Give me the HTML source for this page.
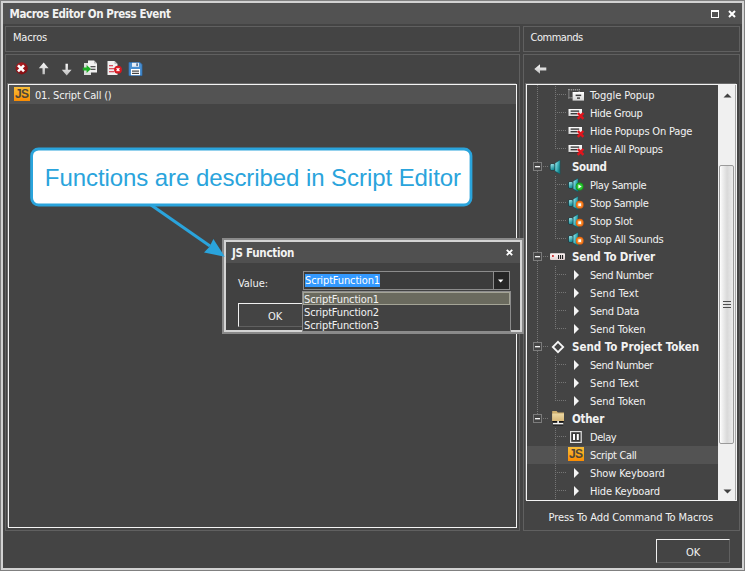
<!DOCTYPE html>
<html><head><meta charset="utf-8"><title>Macros Editor On Press Event</title>
<style>
html,body{margin:0;padding:0}
body{width:745px;height:571px;background:#444;position:relative;overflow:hidden;font-family:"DejaVu Sans Condensed","Liberation Sans",sans-serif;font-size:11px;color:#f2f2f2;letter-spacing:-0.2px}
div,span,svg{position:absolute;box-sizing:border-box}
.t{white-space:nowrap;line-height:14px;height:14px}
.b{font-weight:bold}
.win{left:0;top:0;width:745px;height:571px;border:1px solid #808080}
.win2{left:1px;top:1px;width:743px;height:569px;border:2px solid #d2d2d2}
.title{left:3px;top:3px;width:739px;height:21px;background:#525252}
.box{border:1px solid #606060}
.list{border:1px solid #f4f4f4;box-shadow:-1px -1px 0 #6a6a6a;background:#444}
.row{background:#535353}
.ic{overflow:visible}
.js{width:16px;height:14px;background:linear-gradient(#f8bc38,#f9a51c 55%,#fb8c02);color:#4e4638;font-family:"Liberation Sans",sans-serif;font-weight:bold;font-size:12px;line-height:14px;text-align:center;letter-spacing:-0.6px;text-indent:-0.5px}
.vd{width:1px;background-image:linear-gradient(#767676 50%,transparent 50%);background-size:1px 2px}
.hd{height:1px;background-image:linear-gradient(90deg,#767676 50%,transparent 50%);background-size:2px 1px}
.exp{width:9px;height:9px;border:1px solid #7c7c7c;background:#444}
.exp i{position:absolute;left:1px;top:3px;width:5px;height:1px;background:#f4f4f4;box-shadow:0 0.5px 0 #bbb}
.btn{border:1px solid;border-color:#f0f0f0 #606060 #606060 #f0f0f0;background:#444;text-align:center;line-height:22px;padding-top:2px}
</style></head><body>
<svg width="0" height="0" style="left:0;top:0"><defs>
<linearGradient id="sg" x1="0" y1="0" x2="1" y2="0.6"><stop offset="0" stop-color="#b4ecee"/><stop offset="0.5" stop-color="#4cbcc4"/><stop offset="1" stop-color="#128088"/></linearGradient>
<linearGradient id="sg2" x1="0" y1="0" x2="0.4" y2="1"><stop offset="0" stop-color="#a8e8ec"/><stop offset="1" stop-color="#1a909a"/></linearGradient>
<linearGradient id="wg" x1="0" y1="0" x2="0" y2="1"><stop offset="0" stop-color="#ffffff"/><stop offset="1" stop-color="#d4d4d4"/></linearGradient>
<linearGradient id="dg" x1="0" y1="0" x2="0" y2="1"><stop offset="0" stop-color="#fff6f6"/><stop offset="1" stop-color="#e0d0d0"/></linearGradient>
<linearGradient id="fg" x1="0" y1="0" x2="0" y2="1"><stop offset="0" stop-color="#ecd8a4"/><stop offset="1" stop-color="#d8b878"/></linearGradient>
</defs></svg>
<div class="win"></div><div class="win2"></div>
<div class="title"></div>
<span class="t b" style="left:9.5px;top:7px;letter-spacing:-0.42px;font-size:11.5px">Macros Editor On Press Event</span>
<svg style="left:711px;top:10px" width="8" height="8" viewBox="0 0 8 8"><path d="M0 0H8V8H0Z M1 2V7H7V2Z" fill="#fff" fill-rule="evenodd"/></svg>
<svg style="left:728px;top:10px" width="8" height="8" viewBox="0 0 8 8"><path d="M1 1L7 7M7 1L1 7" stroke="#fff" stroke-width="2"/></svg>

<div class="box" style="left:5px;top:26px;width:515px;height:26px"></div>
<div class="box" style="left:523px;top:26px;width:217px;height:26px"></div>
<div class="box" style="left:5px;top:54px;width:515px;height:477px"></div>
<div class="box" style="left:523px;top:54px;width:217px;height:477px"></div>
<span class="t" style="left:13px;top:31px;letter-spacing:-0.18px">Macros</span>
<span class="t" style="left:530.6px;top:31px;letter-spacing:-0.50px">Commands</span>


<svg style="left:15px;top:61px" width="14" height="14" viewBox="0 0 14 14"><defs><radialGradient id="rg" cx="0.4" cy="0.3" r="0.8"><stop offset="0" stop-color="#b42024"/><stop offset="1" stop-color="#7a0c10"/></radialGradient></defs><circle cx="6.7" cy="7.3" r="6.1" fill="url(#rg)"/><path d="M3 4.3L9 10.4M9 4.3L3 10.4" stroke="#fff" stroke-width="2.6"/></svg>
<svg style="left:38px;top:62.4px" width="12" height="13" viewBox="0 0 12 13"><defs><linearGradient id="ag" x1="0" y1="0" x2="0" y2="1"><stop offset="0" stop-color="#fafafa"/><stop offset="1" stop-color="#bdbdbd"/></linearGradient></defs><path d="M5.7 0.5L10.6 6.3H6.9V12.3H4.5V6.3H0.8Z" fill="url(#ag)"/></svg>
<svg style="left:61px;top:62.5px" width="12" height="13" viewBox="0 0 12 13"><path d="M5.7 12.5L10.6 6.7H6.9V0.7H4.5V6.7H0.8Z" fill="url(#ag)"/></svg>
<svg style="left:82px;top:60px" width="16" height="16" viewBox="0 0 16 16"><path d="M2 3H9V15H2Z" fill="#dcdcdc"/><path d="M6 0.5H12L15 3.5V12.5H6Z" fill="#f2f2f2"/><path d="M12 0.5V3.5H15Z" fill="#bbb"/><rect x="8.5" y="6" width="5" height="1.3" fill="#555"/><rect x="8.5" y="8.7" width="5" height="1.3" fill="#555"/><path d="M0.8 7.4H4.6V5L9 9L4.6 13V10.6H0.8Z" fill="#1cae24"/></svg>
<svg style="left:106px;top:60px" width="16" height="16" viewBox="0 0 16 16"><path d="M1.5 1H8.5L11.5 4V15H1.5Z" fill="#f0f0f0"/><path d="M8.5 1V4H11.5Z" fill="#bbb"/><rect x="3" y="5" width="4" height="1.3" fill="#d85060"/><rect x="3" y="8" width="6" height="1.3" fill="#d85060"/><rect x="3" y="11" width="5" height="1.3" fill="#d85060"/><circle cx="12" cy="9.7" r="3.9" fill="#d81820"/><path d="M10.6 8.3L13.4 11.1M13.4 8.3L10.6 11.1" stroke="#fff" stroke-width="1.3"/></svg>
<svg style="left:128px;top:61px" width="15" height="15" viewBox="0 0 15 15"><path d="M1 1.5H12L14 3.5V14.5H1Z" fill="#4a8fd0"/><path d="M1 1.5H12L14 3.5V14.5H1Z" fill="none" stroke="#2f6fb0" stroke-width="0.8"/><rect x="4" y="1.8" width="7" height="4" fill="#e8eef6"/><rect x="8.3" y="2.3" width="1.6" height="2.8" fill="#4a6a90"/><rect x="3" y="8" width="9" height="6.2" fill="#fff"/><rect x="4" y="9.5" width="7" height="1.2" fill="#444"/><rect x="4" y="11.8" width="7" height="1.2" fill="#444"/></svg>
<svg style="left:533.5px;top:63.4px" width="13" height="12" viewBox="0 0 13 12"><path d="M0.3 6L6 1.2V4.6H12.3V7.4H6V10.8Z" fill="url(#ag)"/></svg>


<div class="list" style="left:8px;top:84px;width:509px;height:444px"></div>
<div class="row" style="left:9px;top:85px;width:507px;height:19px"></div>
<div class="js" style="left:14px;top:87px">JS</div>
<span class="t" style="left:35px;top:89px;letter-spacing:-0.20px">01. Script Call ()</span>


<div class="list" style="left:526px;top:84px;width:211px;height:417px"></div>
<div class="row" style="left:527px;top:446px;width:191px;height:18px"></div>
<div class="vd" style="left:537px;top:85px;width:1px;height:330px"></div>

<div class="vd" style="left:555px;top:86px;height:64px"></div>
<div class="vd" style="left:555px;top:176px;height:64px"></div>
<div class="vd" style="left:555px;top:266px;height:64px"></div>
<div class="vd" style="left:555px;top:356px;height:46px"></div>
<div class="vd" style="left:555px;top:428px;height:72px"></div>
<div class="hd" style="left:557px;top:94px;width:9px"></div>
<svg class="ic" style="left:568px;top:87px" width="16" height="16" viewBox="0 0 16 16"><rect x="0.8" y="2.7" width="10.4" height="8" fill="none" stroke="#a8a8a8" stroke-width="1.4" stroke-dasharray="1 1"/><rect x="4.6" y="5" width="11.4" height="8.6" fill="url(#wg)"/><rect x="7.6" y="7.6" width="5.6" height="1.5" fill="#3c3c3c"/><rect x="9" y="10.4" width="3" height="1.4" fill="#3c3c3c"/></svg>
<span class="t" style="left:590px;top:89px;letter-spacing:-0.06px">Toggle Popup</span>
<div class="hd" style="left:557px;top:112px;width:9px"></div>
<svg class="ic" style="left:568px;top:105px" width="16" height="16" viewBox="0 0 16 16"><rect x="0.5" y="4" width="13.5" height="7.2" fill="url(#wg)"/><rect x="0.5" y="11.2" width="13.5" height="1" fill="#2e2e2e"/><rect x="2.6" y="5.4" width="8.6" height="1.4" fill="#3c3c3c"/><rect x="2.6" y="8" width="6.4" height="1.4" fill="#3c3c3c"/><path d="M9.8 8 L15.4 13.8 M15.4 8 L9.8 13.8" stroke="#e2141c" stroke-width="2.5"/></svg>
<span class="t" style="left:590px;top:107px;letter-spacing:-0.33px">Hide Group</span>
<div class="hd" style="left:557px;top:130px;width:9px"></div>
<svg class="ic" style="left:568px;top:123px" width="16" height="16" viewBox="0 0 16 16"><rect x="0.5" y="4" width="13.5" height="7.2" fill="url(#wg)"/><rect x="0.5" y="11.2" width="13.5" height="1" fill="#2e2e2e"/><rect x="2.6" y="5.4" width="8.6" height="1.4" fill="#3c3c3c"/><rect x="2.6" y="8" width="6.4" height="1.4" fill="#3c3c3c"/><path d="M9.8 8 L15.4 13.8 M15.4 8 L9.8 13.8" stroke="#e2141c" stroke-width="2.5"/></svg>
<span class="t" style="left:590px;top:125px;letter-spacing:-0.18px">Hide Popups On Page</span>
<div class="hd" style="left:557px;top:148px;width:9px"></div>
<svg class="ic" style="left:568px;top:141px" width="16" height="16" viewBox="0 0 16 16"><rect x="0.5" y="4" width="13.5" height="7.2" fill="url(#wg)"/><rect x="0.5" y="11.2" width="13.5" height="1" fill="#2e2e2e"/><rect x="2.6" y="5.4" width="8.6" height="1.4" fill="#3c3c3c"/><rect x="2.6" y="8" width="6.4" height="1.4" fill="#3c3c3c"/><path d="M9.8 8 L15.4 13.8 M15.4 8 L9.8 13.8" stroke="#e2141c" stroke-width="2.5"/></svg>
<span class="t" style="left:590px;top:143px;letter-spacing:-0.28px">Hide All Popups</span>
<div class="exp" style="left:533px;top:162px"><i></i></div>
<div class="hd" style="left:543px;top:166px;width:6px"></div>
<svg class="ic" style="left:549px;top:159px" width="16" height="16" viewBox="0 0 16 16"><rect x="0.8" y="4.8" width="5" height="6.6" rx="1.4" fill="#0c3c44"/><rect x="1.5" y="5" width="4" height="6" rx="1" fill="url(#sg2)"/><path d="M6 4 L11.3 0.8 V15.5 L6 12.4 Z" fill="#0f5c64"/><path d="M6.3 4.2 L10.8 1.6 V14.4 L6.3 12 Z" fill="url(#sg)"/></svg>
<span class="t b" style="left:572px;top:160px;letter-spacing:-0.46px;font-size:11.5px">Sound</span>
<div class="hd" style="left:557px;top:184px;width:9px"></div>
<svg class="ic" style="left:568px;top:177px" width="16" height="16" viewBox="0 0 16 16"><rect x="0.2" y="4.8" width="4.8" height="6.6" rx="1.4" fill="#0c3c44"/><rect x="0.9" y="5" width="3.8" height="6" rx="1" fill="url(#sg2)"/><path d="M5.2 4 L10.2 1 V15.2 L5.2 12.2 Z" fill="#0f5c64"/><path d="M5.5 4.2 L9.8 1.8 V14.2 L5.5 11.8 Z" fill="url(#sg)"/><circle cx="11.6" cy="9.5" r="3.9" fill="#149a1a"/><circle cx="11.6" cy="9.5" r="3.1" fill="#2cc832"/><path d="M10.4 7.6 L13.7 9.5 L10.4 11.4 Z" fill="#fff"/></svg>
<span class="t" style="left:590px;top:179px;letter-spacing:-0.43px">Play Sample</span>
<div class="hd" style="left:557px;top:202px;width:9px"></div>
<svg class="ic" style="left:568px;top:195px" width="16" height="16" viewBox="0 0 16 16"><rect x="0.2" y="4.8" width="4.8" height="6.6" rx="1.4" fill="#0c3c44"/><rect x="0.9" y="5" width="3.8" height="6" rx="1" fill="url(#sg2)"/><path d="M5.2 4 L10.2 1 V15.2 L5.2 12.2 Z" fill="#0f5c64"/><path d="M5.5 4.2 L9.8 1.8 V14.2 L5.5 11.8 Z" fill="url(#sg)"/><circle cx="11.7" cy="9.7" r="3.9" fill="#e8640c"/><circle cx="11.7" cy="9.7" r="3" fill="#f88a2c"/><rect x="10.3" y="8.3" width="2.8" height="2.8" fill="#fff"/></svg>
<span class="t" style="left:590px;top:197px;letter-spacing:-0.40px">Stop Sample</span>
<div class="hd" style="left:557px;top:220px;width:9px"></div>
<svg class="ic" style="left:568px;top:213px" width="16" height="16" viewBox="0 0 16 16"><rect x="0.2" y="4.8" width="4.8" height="6.6" rx="1.4" fill="#0c3c44"/><rect x="0.9" y="5" width="3.8" height="6" rx="1" fill="url(#sg2)"/><path d="M5.2 4 L10.2 1 V15.2 L5.2 12.2 Z" fill="#0f5c64"/><path d="M5.5 4.2 L9.8 1.8 V14.2 L5.5 11.8 Z" fill="url(#sg)"/><circle cx="11.7" cy="9.7" r="3.9" fill="#e8640c"/><circle cx="11.7" cy="9.7" r="3" fill="#f88a2c"/><rect x="10.3" y="8.3" width="2.8" height="2.8" fill="#fff"/></svg>
<span class="t" style="left:590px;top:215px;letter-spacing:-0.22px">Stop Slot</span>
<div class="hd" style="left:557px;top:238px;width:9px"></div>
<svg class="ic" style="left:568px;top:231px" width="16" height="16" viewBox="0 0 16 16"><rect x="0.2" y="4.8" width="4.8" height="6.6" rx="1.4" fill="#0c3c44"/><rect x="0.9" y="5" width="3.8" height="6" rx="1" fill="url(#sg2)"/><path d="M5.2 4 L10.2 1 V15.2 L5.2 12.2 Z" fill="#0f5c64"/><path d="M5.5 4.2 L9.8 1.8 V14.2 L5.5 11.8 Z" fill="url(#sg)"/><circle cx="11.7" cy="9.7" r="3.9" fill="#e8640c"/><circle cx="11.7" cy="9.7" r="3" fill="#f88a2c"/><rect x="10.3" y="8.3" width="2.8" height="2.8" fill="#fff"/></svg>
<span class="t" style="left:590px;top:233px;letter-spacing:-0.26px">Stop All Sounds</span>
<div class="exp" style="left:533px;top:252px"><i></i></div>
<div class="hd" style="left:543px;top:256px;width:6px"></div>
<svg class="ic" style="left:549px;top:249px" width="17" height="16" viewBox="0 0 17 16"><rect x="1" y="4.3" width="15" height="6.8" rx="1" fill="url(#dg)"/><rect x="3" y="6" width="1.8" height="2" fill="#d03a3a"/><rect x="9" y="6" width="1.1" height="4" fill="#222"/><rect x="11" y="6" width="1.1" height="4" fill="#222"/><rect x="13" y="6" width="1.1" height="4" fill="#222"/></svg>
<span class="t b" style="left:572px;top:250px;letter-spacing:-0.16px;font-size:11.5px">Send To Driver</span>
<div class="hd" style="left:557px;top:274px;width:9px"></div>
<svg class="ic" style="left:568px;top:267px" width="16" height="16" viewBox="0 0 16 16"><path d="M6 3 L11 8 L6 13 Z" fill="#f4f4f4"/></svg>
<span class="t" style="left:590px;top:269px;letter-spacing:-0.44px">Send Number</span>
<div class="hd" style="left:557px;top:292px;width:9px"></div>
<svg class="ic" style="left:568px;top:285px" width="16" height="16" viewBox="0 0 16 16"><path d="M6 3 L11 8 L6 13 Z" fill="#f4f4f4"/></svg>
<span class="t" style="left:590px;top:287px;letter-spacing:0.10px">Send Text</span>
<div class="hd" style="left:557px;top:310px;width:9px"></div>
<svg class="ic" style="left:568px;top:303px" width="16" height="16" viewBox="0 0 16 16"><path d="M6 3 L11 8 L6 13 Z" fill="#f4f4f4"/></svg>
<span class="t" style="left:590px;top:305px;letter-spacing:-0.29px">Send Data</span>
<div class="hd" style="left:557px;top:328px;width:9px"></div>
<svg class="ic" style="left:568px;top:321px" width="16" height="16" viewBox="0 0 16 16"><path d="M6 3 L11 8 L6 13 Z" fill="#f4f4f4"/></svg>
<span class="t" style="left:590px;top:323px;letter-spacing:-0.06px">Send Token</span>
<div class="exp" style="left:533px;top:342px"><i></i></div>
<div class="hd" style="left:543px;top:346px;width:6px"></div>
<svg class="ic" style="left:549px;top:339px" width="16" height="16" viewBox="0 0 16 16"><path d="M9 2.8 L14.2 8 L9 13.2 L3.8 8 Z" fill="none" stroke="#f6f6f6" stroke-width="1.8"/></svg>
<span class="t b" style="left:572px;top:340px;letter-spacing:-0.03px;font-size:11.5px">Send To Project Token</span>
<div class="hd" style="left:557px;top:364px;width:9px"></div>
<svg class="ic" style="left:568px;top:357px" width="16" height="16" viewBox="0 0 16 16"><path d="M6 3 L11 8 L6 13 Z" fill="#f4f4f4"/></svg>
<span class="t" style="left:590px;top:359px;letter-spacing:-0.44px">Send Number</span>
<div class="hd" style="left:557px;top:382px;width:9px"></div>
<svg class="ic" style="left:568px;top:375px" width="16" height="16" viewBox="0 0 16 16"><path d="M6 3 L11 8 L6 13 Z" fill="#f4f4f4"/></svg>
<span class="t" style="left:590px;top:377px;letter-spacing:0.10px">Send Text</span>
<div class="hd" style="left:557px;top:400px;width:9px"></div>
<svg class="ic" style="left:568px;top:393px" width="16" height="16" viewBox="0 0 16 16"><path d="M6 3 L11 8 L6 13 Z" fill="#f4f4f4"/></svg>
<span class="t" style="left:590px;top:395px;letter-spacing:-0.06px">Send Token</span>
<div class="exp" style="left:533px;top:414px"><i></i></div>
<div class="hd" style="left:543px;top:418px;width:6px"></div>
<svg class="ic" style="left:549px;top:411px" width="16" height="16" viewBox="0 0 16 16"><path d="M3.2 0 H7.6 L8.8 1.6 H15 V10 H3.2 Z" fill="#cfb070"/><path d="M3.2 2.6 H15 V10 H3.2 Z" fill="url(#fg)"/><rect x="3.6" y="10" width="11" height="1.2" fill="#111"/><rect x="8.3" y="10" width="1.6" height="2.4" fill="#f4f4f4"/><rect x="4" y="12" width="10.2" height="1.6" fill="#f6f6f6"/><rect x="4" y="13.6" width="10.2" height="0.9" fill="#111"/></svg>
<span class="t b" style="left:572px;top:412px;letter-spacing:-0.25px;font-size:11.5px">Other</span>
<div class="hd" style="left:557px;top:436px;width:9px"></div>
<svg class="ic" style="left:568px;top:429px" width="16" height="16" viewBox="0 0 16 16"><rect x="2.6" y="2.6" width="10.6" height="10.8" fill="#3a3a3a" stroke="#e4e4e4" stroke-width="1.2"/><rect x="5" y="5" width="2" height="6" fill="#fff"/><rect x="8.8" y="5" width="2" height="6" fill="#fff"/></svg>
<span class="t" style="left:590px;top:431px;letter-spacing:-0.44px">Delay</span>
<div class="js" style="left:568px;top:447px">JS</div>
<span class="t" style="left:590px;top:449px;letter-spacing:-0.35px">Script Call</span>
<div class="hd" style="left:557px;top:472px;width:9px"></div>
<svg class="ic" style="left:568px;top:465px" width="16" height="16" viewBox="0 0 16 16"><path d="M6 3 L11 8 L6 13 Z" fill="#f4f4f4"/></svg>
<span class="t" style="left:590px;top:467px;letter-spacing:-0.13px">Show Keyboard</span>
<div class="hd" style="left:557px;top:490px;width:9px"></div>
<svg class="ic" style="left:568px;top:483px" width="16" height="16" viewBox="0 0 16 16"><path d="M6 3 L11 8 L6 13 Z" fill="#f4f4f4"/></svg>
<span class="t" style="left:590px;top:485px;letter-spacing:-0.18px">Hide Keyboard</span>

<div style="left:718px;top:85px;width:18px;height:415px;background:#f0f0f0"></div>
<div style="left:735px;top:85px;width:1px;height:415px;background:#a8a8a8"></div>
<svg style="left:723px;top:93px" width="9" height="5" viewBox="0 0 9 5"><path d="M0.5 4.5L4.5 0.5L8.5 4.5Z" fill="#404040"/></svg>
<svg style="left:723px;top:489px" width="9" height="5" viewBox="0 0 9 5"><path d="M0.5 0.5L4.5 4.5L8.5 0.5Z" fill="#404040"/></svg>
<div style="left:719px;top:165px;width:15px;height:279px;border:1px solid #9a9a9a;border-radius:2px;background:linear-gradient(90deg,#fff 0,#f2f2f2 15%,#d9d9d9 55%,#ececec 100%)"></div>
<div style="left:723px;top:301px;width:8px;height:1px;background:#505050"></div>
<div style="left:723px;top:304px;width:8px;height:1px;background:#505050"></div>
<div style="left:723px;top:307px;width:8px;height:1px;background:#505050"></div>
<span class="t" style="left:548.5px;top:511px;letter-spacing:-0.09px">Press To Add Command To Macros</span>
<div class="btn" style="left:656px;top:539px;width:74px;height:24px">OK</div>


<div style="left:222px;top:238px;width:302px;height:96px;border:2px solid #8a8a8a;background:#414141"></div>
<div style="left:224px;top:240px;width:298px;height:92px;border:2px solid #d4d4d4"></div>
<div style="left:226px;top:242px;width:294px;height:21px;background:#505050"></div>
<span class="t b" style="left:232px;top:246px;letter-spacing:-0.29px;font-size:11.5px">JS Function</span>
<svg style="left:506px;top:249px" width="7" height="7" viewBox="0 0 7 7"><path d="M0.8 0.8L6.2 6.2M6.2 0.8L0.8 6.2" stroke="#fff" stroke-width="1.9"/></svg>
<span class="t" style="left:238px;top:277px;letter-spacing:-0.07px">Value:</span>
<div class="btn" style="left:238px;top:303px;width:74px;height:24px">OK</div>
<div style="left:303px;top:271px;width:207px;height:19px;border:1px solid #8c8c8c;background:#3c3c3c"></div>
<div style="left:305px;top:274px;width:75px;height:13px;background:#3399ff"></div>
<span class="t" style="left:305px;top:274px;letter-spacing:-0.14px;color:#fff">ScriptFunction1</span>
<div style="left:493px;top:272px;width:16px;height:17px;background:#262626;border-left:1px solid #8c8c8c"></div>
<svg style="left:498px;top:279px" width="6" height="4" viewBox="0 0 6 4"><path d="M0 0.5H5.4L2.7 3.4Z" fill="#fff"/></svg>
<div style="left:302px;top:291px;width:209px;height:41px;border:1px solid #8c8c8c;background:#424242"></div>
<div style="left:303px;top:292px;width:207px;height:13px;border:1px solid #a4a496;background:#6a6a5e"></div>
<span class="t" style="left:304px;top:293px;letter-spacing:-0.14px">ScriptFunction1</span>
<span class="t" style="left:304px;top:306px;letter-spacing:-0.14px">ScriptFunction2</span>
<span class="t" style="left:304px;top:319px;letter-spacing:-0.14px">ScriptFunction3</span>


<svg style="left:0;top:0" width="745" height="571" viewBox="0 0 745 571">
<path d="M151 205 L210 246" stroke="#2aa4dc" stroke-width="3" fill="none"/>
<path d="M224.8 256.7 L204 252.5 L209.5 246.8 L213.4 239 Z" fill="#2aa4dc"/>
<rect x="31.6" y="149" width="439.4" height="56" rx="7" ry="7" fill="#fff" stroke="#2aa4dc" stroke-width="2.8"/>
<text x="44.8" y="186" font-family="Liberation Sans, sans-serif" font-size="24" fill="#2aa4dc" textLength="416" lengthAdjust="spacing">Functions are described in Script Editor</text>
</svg>

</body></html>
